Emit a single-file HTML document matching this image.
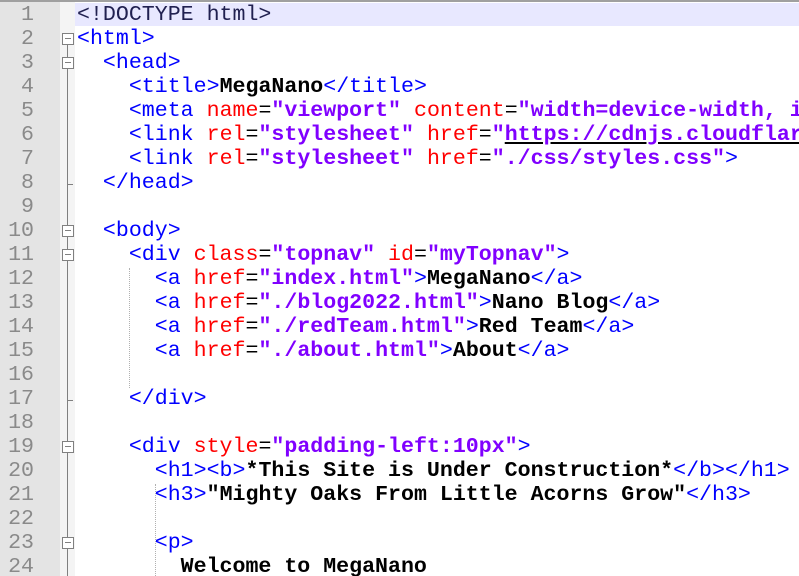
<!DOCTYPE html>
<html><head><style>
html,body{margin:0;width:799px;height:576px;overflow:hidden}
body{background:#fff;position:relative;font-family:"Liberation Mono",monospace;font-size:21.6px}
#top{position:absolute;left:0;top:0;width:799px;height:2px;background:#a0a0a0}
#gut{position:absolute;left:0;top:2px;width:60px;height:574px;background:#e4e4e4}
#fm{position:absolute;left:60px;top:2px;width:15px;height:574px;background:#f4f4f4}
.hl{position:absolute;left:75px;top:3px;width:724px;height:23px;background:#e8e8ff}
.ln{position:absolute;left:0;width:34px;text-align:right;color:#8a8a8a;height:24px;line-height:24px}
.l{position:absolute;left:77px;right:0;overflow:hidden;height:24px;line-height:24px;white-space:pre;color:#000}
.t{color:#0000ff}.a{color:#ff0000}.v{color:#8000ff;font-weight:bold}.b{font-weight:bold}
.box{position:absolute;left:62px;width:10px;height:10px;border:1px solid #808080;background:#fff}
.box:after{content:"";position:absolute;left:2px;top:4px;width:6px;height:1px;background:#808080}
.vl{position:absolute;left:67px;width:1px;background:#808080}
.tick{position:absolute;left:67px;width:6px;height:1px;background:#808080}
.ig{position:absolute;width:0;border-left:1px dotted #b0b0b0}
#c{position:absolute;left:0;top:3px;width:799px;height:576px}
</style></head><body>
<div id="top"></div><div id="gut"></div><div id="fm"></div><div class="hl"></div>
<div class="vl" style="top:44px;height:532px"></div>
<div class="box" style="top:33px"></div>
<div class="box" style="top:57px"></div>
<div class="tick" style="top:184px"></div>
<div class="box" style="top:225px"></div>
<div class="box" style="top:249px"></div>
<div class="tick" style="top:400px"></div>
<div class="box" style="top:441px"></div>
<div class="box" style="top:537px"></div>
<div class="ig" style="left:129px;top:268px;height:120px"></div>
<div class="ig" style="left:155px;top:484px;height:92px"></div>
<div id="c">
<div class="ln" style="top:0px">1</div><div class="ln" style="top:24px">2</div><div class="ln" style="top:48px">3</div><div class="ln" style="top:72px">4</div><div class="ln" style="top:96px">5</div><div class="ln" style="top:120px">6</div><div class="ln" style="top:144px">7</div><div class="ln" style="top:168px">8</div><div class="ln" style="top:192px">9</div><div class="ln" style="top:216px">10</div><div class="ln" style="top:240px">11</div><div class="ln" style="top:264px">12</div><div class="ln" style="top:288px">13</div><div class="ln" style="top:312px">14</div><div class="ln" style="top:336px">15</div><div class="ln" style="top:360px">16</div><div class="ln" style="top:384px">17</div><div class="ln" style="top:408px">18</div><div class="ln" style="top:432px">19</div><div class="ln" style="top:456px">20</div><div class="ln" style="top:480px">21</div><div class="ln" style="top:504px">22</div><div class="ln" style="top:528px">23</div><div class="ln" style="top:552px">24</div>

<div class="l" style="top:0px"><span style="color:#202050">&lt;!DOCTYPE html&gt;</span></div>
<div class="l" style="top:24px"><span class="t">&lt;html&gt;</span></div>
<div class="l" style="top:48px">  <span class="t">&lt;head&gt;</span></div>
<div class="l" style="top:72px">    <span class="t">&lt;title&gt;</span><span class="b">MegaNano</span><span class="t">&lt;/title&gt;</span></div>
<div class="l" style="top:96px">    <span class="t">&lt;meta </span><span class="a">name</span>=<span class="v">"viewport"</span> <span class="a">content</span>=<span class="v">"width=device-width, initial-scale=1"</span></div>
<div class="l" style="top:120px">    <span class="t">&lt;link </span><span class="a">rel</span>=<span class="v">"stylesheet"</span> <span class="a">href</span>=<span class="v">"<u style="text-decoration-color:#000">https://cdnjs.cloudflare.com</u>"</span></div>
<div class="l" style="top:144px">    <span class="t">&lt;link </span><span class="a">rel</span>=<span class="v">"stylesheet"</span> <span class="a">href</span>=<span class="v">"./css/styles.css"</span><span class="t">&gt;</span></div>
<div class="l" style="top:168px">  <span class="t">&lt;/head&gt;</span></div>
<div class="l" style="top:216px">  <span class="t">&lt;body&gt;</span></div>
<div class="l" style="top:240px">    <span class="t">&lt;div </span><span class="a">class</span>=<span class="v">"topnav"</span> <span class="a">id</span>=<span class="v">"myTopnav"</span><span class="t">&gt;</span></div>
<div class="l" style="top:264px">      <span class="t">&lt;a </span><span class="a">href</span>=<span class="v">"index.html"</span><span class="t">&gt;</span><span class="b">MegaNano</span><span class="t">&lt;/a&gt;</span></div>
<div class="l" style="top:288px">      <span class="t">&lt;a </span><span class="a">href</span>=<span class="v">"./blog2022.html"</span><span class="t">&gt;</span><span class="b">Nano Blog</span><span class="t">&lt;/a&gt;</span></div>
<div class="l" style="top:312px">      <span class="t">&lt;a </span><span class="a">href</span>=<span class="v">"./redTeam.html"</span><span class="t">&gt;</span><span class="b">Red Team</span><span class="t">&lt;/a&gt;</span></div>
<div class="l" style="top:336px">      <span class="t">&lt;a </span><span class="a">href</span>=<span class="v">"./about.html"</span><span class="t">&gt;</span><span class="b">About</span><span class="t">&lt;/a&gt;</span></div>
<div class="l" style="top:384px">    <span class="t">&lt;/div&gt;</span></div>
<div class="l" style="top:432px">    <span class="t">&lt;div </span><span class="a">style</span>=<span class="v">"padding-left:10px"</span><span class="t">&gt;</span></div>
<div class="l" style="top:456px">      <span class="t">&lt;h1&gt;&lt;b&gt;</span><span class="b">*This Site is Under Construction*</span><span class="t">&lt;/b&gt;&lt;/h1&gt;</span></div>
<div class="l" style="top:480px">      <span class="t">&lt;h3&gt;</span><span class="b">"Mighty Oaks From Little Acorns Grow"</span><span class="t">&lt;/h3&gt;</span></div>
<div class="l" style="top:528px">      <span class="t">&lt;p&gt;</span></div>
<div class="l" style="top:552px">        <span class="b">Welcome to MegaNano</span></div>
</div>
</body></html>
